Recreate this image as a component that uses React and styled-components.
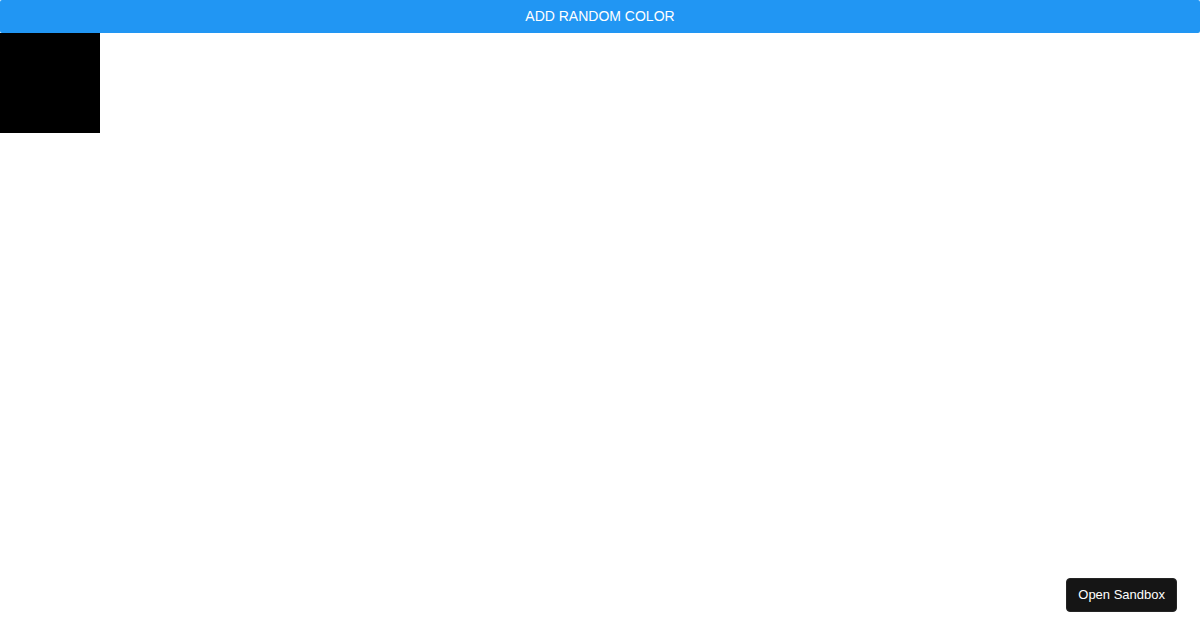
import React, { useState } from "react";
import styled, { createGlobalStyle } from "styled-components";

const randomColor = () =>
  "#" + Math.floor(Math.random() * 0xffffff).toString(16).padStart(6, "0");

const App = () => {
  const [colors, setColors] = useState(["#000000"]);

  const addColor = () => setColors([...colors, randomColor()]);

  return (
    <>
      <GlobalStyle />
      <AddButton type="button" onClick={addColor}>
        Add random color
      </AddButton>
      <Colors>
        {colors.map((color, index) => (
          <Swatch key={index} $color={color} />
        ))}
      </Colors>
      <SandboxLink href="#sandbox">Open Sandbox</SandboxLink>
    </>
  );
};

const GlobalStyle = createGlobalStyle`
  * {
    box-sizing: border-box;
  }

  body {
    margin: 0;
    background: #fff;
    font-family: "Liberation Sans", Arial, sans-serif;
  }
`;

const AddButton = styled.button`
  display: block;
  width: 100%;
  padding: 8px;
  border: none;
  border-radius: 2px;
  background: #2196f3;
  color: #fff;
  font-family: inherit;
  font-size: 14px;
  line-height: 17px;
  text-transform: uppercase;
  cursor: pointer;
`;

const Colors = styled.div`
  display: flex;
  flex-wrap: wrap;
`;

const Swatch = styled.div`
  width: 100px;
  height: 100px;
  background: ${(props) => props.$color};
`;

const SandboxLink = styled.a`
  position: fixed;
  right: 23px;
  bottom: 18px;
  padding: 8px 11px;
  border: 1px solid #242424;
  border-radius: 4px;
  background: #151515;
  color: #fff;
  font-size: 13px;
  line-height: 16px;
  text-decoration: none;
`;

export default App;
